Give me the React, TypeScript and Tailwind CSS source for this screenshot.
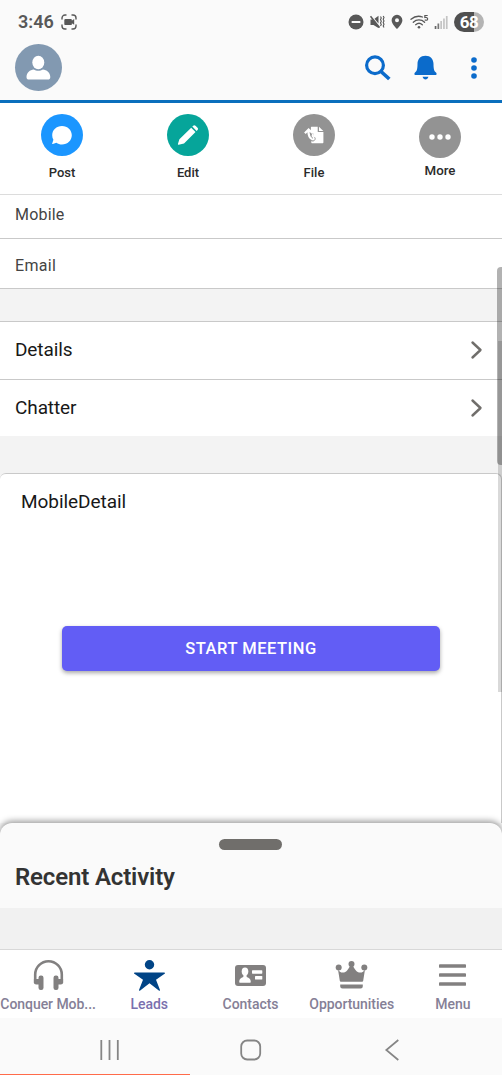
import React from "react";

interface IconProps {
  className?: string;
}

interface QuickAction {
  label: string;
  color: string;
  offset: string;
  icon: React.ReactNode;
}

interface TabItem {
  label: string;
  active?: boolean;
  icon: React.ReactNode;
}

const RecordIcon: React.FC<IconProps> = ({ className }) => (
  <svg width="16" height="16" viewBox="0 0 16 16" fill="none" className={className}>
    <path
      d="M1 5V4a3 3 0 0 1 3-3h1M11 1h1a3 3 0 0 1 3 3v1M15 11v1a3 3 0 0 1-3 3h-1M5 15H4a3 3 0 0 1-3-3v-1"
      stroke="currentColor"
      strokeWidth="1.4"
      strokeLinecap="round"
    />
    <rect x="3.3" y="4.9" width="7.6" height="6.2" rx="1.2" fill="currentColor" />
    <path d="M10 7.2 13.2 5v5.8L10 8.8z" fill="currentColor" />
  </svg>
);

const StatusIcons = () => (
  <div className="flex items-center h-6 text-[#585858]">
    <svg width="16" height="16" viewBox="0 0 16 16">
      <circle cx="8" cy="8" r="7.5" fill="currentColor" />
      <rect x="3.6" y="7" width="8.8" height="2" rx="0.5" fill="#fafafa" />
    </svg>
    <svg width="16" height="16" viewBox="0 0 16 16" className="ml-[5px]" fill="none">
      <path d="M1.5 5.5h2.2l7 8.300H9L4.500 11h-3zM5.500 4.800 9.500 1.800v7.700z" fill="currentColor" />
      <path d="M1.500 2.200 10.500 13.500" stroke="currentColor" strokeWidth="1.5" />
      <path
        d="m11.500 2.500.8 1.500-.8 1.600.8 1.700-.8 1.600.8 1.600-.8 1.600M14.200 2l.8 1.600-.8 1.700.8 1.600-.8 1.700.8 1.600-.8 1.700.8 1.600"
        stroke="currentColor"
        strokeWidth="1.1"
      />
    </svg>
    <svg width="12" height="16" viewBox="0 0 12 16" className="ml-[6px]">
      <path
        fillRule="evenodd"
        fill="currentColor"
        d="M6 .8A5.400 5.400 0 0 0 .6 6.200C.6 10 6 15 6 15s5.400-5 5.400-8.800A5.400 5.400 0 0 0 6 .8zM6 4.200a2 2 0 1 1 0 4 2 2 0 0 1 0-4z"
      />
    </svg>
    <svg width="19" height="16" viewBox="0 0 19 16" className="ml-[7px]" fill="none">
      <path
        d="M1 5.300C4.600 2.200 9 1.700 12.500 3M3.300 8.200c3.200-3 8.100-3 11.300 0M5.700 10.700c2-1.700 4.700-1.700 6.600 0"
        stroke="currentColor"
        strokeWidth="1.3"
        strokeLinecap="round"
      />
      <circle cx="9" cy="13.200" r="1.3" fill="currentColor" />
      <path
        d="M17.700 1.500h-2.900v2c1.900-.3 2.900.2 2.900 1.400 0 1.300-1.700 1.700-3 .9"
        stroke="currentColor"
        strokeWidth="1.1"
      />
    </svg>
    <svg width="14" height="14" viewBox="0 0 14 14" className="ml-[5px]">
      <path d="M.7 11h1.700v3H.7z" fill="#666" />
      <path d="M3.500 8.500h1.700V14H3.500z" fill="#777" />
      <path d="M6.300 6H8v8H6.300zM9.100 3.500h1.700V14H9.100zM11.900 1h1.700v13h-1.700z" fill="#c4c4c4" />
    </svg>
    <div className="ml-[6px] w-[30px] h-5 rounded-full bg-linear-to-r from-[#505050] from-68% to-[#b4b4b4] to-68% text-white text-[17px] leading-5 font-bold text-center tracking-[-0.5px]">
      68
    </div>
  </div>
);

const StatusBar = () => (
  <div className="h-11 pl-[18px] pr-[18px] flex items-center justify-between">
    <div className="flex items-center text-[#585858]">
      <span className="text-[18px] font-semibold leading-5">3:46</span>
      <RecordIcon className="ml-[7px]" />
    </div>
    <StatusIcons />
  </div>
);

const Header = () => (
  <div className="h-[59px] pl-[15px] pr-[25px] flex items-start justify-between border-b-[3px] border-[#0b6fbd]">
    <div className="w-[47px] h-[47px] rounded-full bg-[#8299b1]">
      <svg width="47" height="47" viewBox="0 0 47 47" fill="#fff">
        <ellipse cx="23.3" cy="18.5" rx="6" ry="6.7" />
        <path d="M11.500 33c0-4.500 3.600-7.300 7.200-7.600 2.700 1.800 6.500 1.800 9.200 0 3.700.3 7.400 3.100 7.400 7.600 0 1.800-1 2.600-2.500 2.600H14c-1.500 0-2.500-.8-2.500-2.600z" />
      </svg>
    </div>
    <div className="flex items-center h-[47px] text-[#0b6bcb]">
      <svg width="26" height="26" viewBox="0 0 26 26" fill="none" stroke="currentColor">
        <circle cx="10" cy="10.300" r="8.400" strokeWidth="3.2" />
        <path d="m16 16.500 8.300 7.500" strokeWidth="3.7" />
      </svg>
      <svg width="24" height="26" viewBox="0 0 24 26" fill="currentColor" className="ml-[23px]">
        <path d="M11.500.8c-5 0-8 3.400-8 8.200 0 5.800-1 7.400-2.500 8.600-.5.400-.6.800-.6 1.400 0 .6.500 1 1.100 1h20c.6 0 1.100-.4 1.100-1s-.1-1-.6-1.400c-1.500-1.200-2.500-2.800-2.500-8.600 0-4.800-3-8.200-8-8.200z" />
        <path d="M8.600 21.800h5.800c-.5 1.700-1.600 2.600-2.900 2.600s-2.400-.9-2.900-2.600z" />
      </svg>
      <svg width="6" height="24" viewBox="0 0 6 24" fill="currentColor" className="ml-[33px]">
        <circle cx="3" cy="4" r="2.8" />
        <circle cx="3" cy="12" r="2.8" />
        <circle cx="3" cy="20" r="2.8" />
      </svg>
    </div>
  </div>
);

const quickActions: QuickAction[] = [
  {
    label: "Post",
    color: "bg-[#1b96ff]",
    offset: "pt-[11px]",
    icon: (
      <path d="M21 12c-5.600 0-9.800 4-9.800 9.300 0 1.700.4 3.200 1.200 4.500l-1.200 3.600c-.2.500.1.700.6.500l3.600-1.200c1.600 1.100 3.500 1.800 5.600 1.800 5.600 0 9.800-4.100 9.800-9.200S26.600 12 21 12z" />
    ),
  },
  {
    label: "Edit",
    color: "bg-[#06a59a]",
    offset: "pt-[11px]",
    icon: (
      <path d="m24.200 13.700 4.300 4.300L17 29.400l-5.300 1.400c-.6.200-.9-.2-.8-.7l1.500-4.900zM25.300 12.600l.9-.9c.7-.7 1.600-.7 2.300 0l2 2c.7.700.7 1.600 0 2.300l-.9.900z" />
    ),
  },
  {
    label: "File",
    color: "bg-[#939393]",
    offset: "pt-[11px]",
    icon: (
      <>
        <path d="M18.700 12.700h6v4.700c0 .5.300.7.700.7h5v10.100c0 .7-.4 1-1 1H19.300c-.7 0-1-.4-1-1v-1.500h2.500l1.500-2-2-3 .6-1.500-3-2.800v-3.700c0-.7.200-1 .8-1z" />
        <path d="M26 12.700l4.300 4.200H26z" />
        <path
          d="M11.900 19.300l3.700-3.800 4.100 3.800M15.600 16c-.4 4.500.6 7.800 4 9.300 1.500.6 2-.7 1.200-1.500-1.900-1.500-1.700-2.700-.2-3.600"
          fill="none"
          stroke="#fff"
          strokeWidth="2.2"
        />
        <path
          d="M18.100 19.700c-.5 2 .1 3.700 1.900 4.600M18.500 26.900c2.700.8 4.700-1.600 3.100-3.700"
          fill="none"
          stroke="#939393"
          strokeWidth="0.9"
        />
      </>
    ),
  },
  {
    label: "More",
    color: "bg-[#939393]",
    offset: "pt-[13px]",
    icon: (
      <>
        <circle cx="13" cy="21" r="2.7" />
        <circle cx="21" cy="21" r="2.7" />
        <circle cx="29" cy="21" r="2.7" />
      </>
    ),
  },
];

const QuickActions = () => (
  <div className="h-[92px] -mr-0.5 grid grid-cols-4 bg-white border-b border-[#dcdcdc]">
    {quickActions.map((action) => (
      <div key={action.label} className={`flex flex-col items-center pr-[2px] ${action.offset}`}>
        <div className={`w-[42px] h-[42px] rounded-full ${action.color}`}>
          <svg width="42" height="42" viewBox="0 0 42 42" fill="#fff">
            {action.icon}
          </svg>
        </div>
        <span
          className={`leading-4 font-medium text-[#2b2b2b] ${
            action.label === "More" ? "mt-[5px] text-[13.3px]" : "mt-[9px] text-[13px]"
          }`}
        >
          {action.label}
        </span>
      </div>
    ))}
  </div>
);

const LinkRow: React.FC<{ label: string; className: string }> = ({ label, className }) => (
  <div className={`flex items-center justify-between pl-[15px] pr-[19px] bg-white ${className}`}>
    <span className="text-[19px] leading-6 text-[#181818] tracking-[-0.1px]">{label}</span>
    <svg width="13" height="20" viewBox="0 0 13 20" fill="none">
      <path
        d="m2.500 2.500 8 7.500-8 7.500"
        stroke="#706e6b"
        strokeWidth="2.4"
        strokeLinecap="round"
        strokeLinejoin="round"
      />
    </svg>
  </div>
);

const tabs: TabItem[] = [
  {
    label: "Conquer Mob...",
    icon: (
      <>
        <path
          d="M3.200 24V15.500a13.300 13.300 0 0 1 26.600 0V24"
          fill="none"
          stroke="currentColor"
          strokeWidth="2.6"
        />
        <path d="M1.900 20h6v5.500H4.200c-1.400 0-2.300-.8-2.300-2zM31.100 20h-6v5.500h3.700c1.400 0 2.300-.8 2.300-2z" />
        <rect x="6.500" y="16.500" width="5" height="14.500" rx="2.2" />
        <rect x="21.500" y="16.500" width="5" height="14.500" rx="2.2" />
      </>
    ),
  },
  {
    label: "Leads",
    active: true,
    icon: (
      <>
        <circle cx="16.5" cy="5.7" r="4.7" />
        <path d="M1.800 13.500h29.400c.9 0 1.100.8.400 1.300l-8.600 6 3.900 10c.3.900-.4 1.400-1.100.8l-9.300-7.300-9.300 7.300c-.7.600-1.400.1-1.100-.8l3.900-10-8.600-6c-.7-.5-.5-1.300.4-1.300z" />
      </>
    ),
  },
  {
    label: "Contacts",
    icon: (
      <>
        <rect x="1" y="6" width="31" height="21" rx="3" />
        <g fill="#fff">
          <ellipse cx="11" cy="12.5" rx="3.3" ry="3.9" />
          <path d="M5.200 23c0-3 1.600-4.200 4.100-5l.2-2.500h3l.2 2.500c2.500.8 4.100 2 4.100 5 0 .5-.3.700-.8.700H6c-.5 0-.8-.2-.8-.7z" />
          <rect x="18" y="11.2" width="10.300" height="3.5" rx="0.6" />
          <rect x="21" y="17" width="7.3" height="3.5" rx="0.6" />
        </g>
      </>
    ),
  },
  {
    label: "Opportunities",
    icon: (
      <>
        <circle cx="3.7" cy="8.5" r="3" />
        <circle cx="16.5" cy="5" r="3" />
        <circle cx="29.3" cy="8.5" r="3" />
        <path d="M3 10.500c1.700 3.500 6.500 4.500 9.500.5 1.500-1.900 2.700-4 3-6h2c.3 2 1.500 4.100 3 6 3 4 7.800 3 9.500-.5l-1.800 11.300c-.1.600-.5.900-1.100.9H5.900c-.6 0-1-.3-1.100-.9z" />
        <path d="M5.200 25.500h22.600V27c0 1.700-.8 2.500-2.300 2.500h-18c-1.500 0-2.300-.8-2.300-2.500z" />
      </>
    ),
  },
  {
    label: "Menu",
    icon: (
      <>
        <rect x="3" y="5.2" width="27" height="3.6" rx="0.9" />
        <rect x="3" y="14.2" width="27" height="3.6" rx="0.9" />
        <rect x="3" y="23.2" width="27" height="3.6" rx="0.9" />
      </>
    ),
  },
];

const TabBar = () => (
  <div className="h-[69px] -ml-[2px] -mr-[2px] grid grid-cols-5 bg-white border-t border-[#d8d8d8]">
    {tabs.map((tab) => (
      <div key={tab.label} className="flex flex-col items-center pt-[9px] pr-px">
        <svg
          width="33"
          height="33"
          viewBox="0 0 33 33"
          fill="currentColor"
          className={tab.active ? "text-[#014486]" : "text-[#828080]"}
        >
          {tab.icon}
        </svg>
        <span
          className={`mt-[4px] text-[14px] leading-4 font-medium whitespace-nowrap tracking-[-0.05px] ${
            tab.active ? "text-[#7a70ae]" : "text-[#858096]"
          }`}
        >
          {tab.label}
        </span>
      </div>
    ))}
  </div>
);

const SystemNav = () => (
  <div className="relative h-[57px] px-[99px] pt-[21px] flex justify-between bg-[#fafafa] text-[#858585]">
    <svg width="21" height="22" viewBox="0 0 21 22" stroke="currentColor" strokeWidth="1.8">
      <path d="M2.300 1v20M10.500 1v20M18.800 1v20" />
    </svg>
    <svg width="22" height="22" viewBox="0 0 22 22" fill="none">
      <rect x="1.2" y="1.5" width="19" height="19" rx="6" stroke="currentColor" strokeWidth="1.8" />
    </svg>
    <svg width="21" height="22" viewBox="0 0 21 22" fill="none">
      <path d="M16.300 1 4.300 11l12 10" stroke="currentColor" strokeWidth="1.7" />
    </svg>
    <div className="absolute left-0 bottom-0 h-px w-[190px] bg-[#ff6b4a]" />
  </div>
);

const App = () => {
  return (
    <div className="relative w-[502px] h-[1075px] overflow-hidden flex flex-col bg-[#fafafa] font-[Roboto,sans-serif]">
      <StatusBar />
      <Header />
      <QuickActions />

      <div className="h-[44px] pl-[15px] pt-[9px] bg-white border-b border-[#c9c9c9] text-[16px] leading-[22px] text-[#444] tracking-[0.2px]">
        Mobile
      </div>
      <div className="h-[50px] pl-[15px] pt-[15px] bg-white border-b border-[#c9c9c9] text-[16px] leading-[23px] text-[#444] tracking-[0.3px]">
        Email
      </div>
      <div className="h-8 bg-[#f3f3f3]" />
      <LinkRow label="Details" className="h-[59px] pb-px border-y border-[#c9c9c9]" />
      <LinkRow label="Chatter" className="h-[56px]" />

      <div className="h-[387px] pt-[37px] bg-[#f3f3f3]">
        <div className="h-full rounded-t-md border-t border-r border-[#c9c9c9] bg-white">
          <h2 className="pl-[21px] pt-[16px] text-[19px] leading-6 text-[#181818] tracking-[-0.05px]">
            MobileDetail
          </h2>
          <button className="block ml-[62px] mt-[112px] w-[378px] h-[45px] pt-[2px] rounded-[5px] bg-[#625df5] text-white text-[16.5px] font-medium tracking-[0.52px] shadow-[0_2px_4px_rgba(0,0,0,0.35)]">
            START MEETING
          </button>
        </div>
      </div>

      <div className="relative z-10 h-[85px] rounded-t-[12px] bg-[#fafafa] shadow-[0_-2px_6px_rgba(0,0,0,0.4)]">
        <div className="pt-4">
          <div className="ml-[219px] w-[63px] h-[11px] rounded-full bg-[#706e6b]" />
        </div>
        <h2 className="pl-[15px] pt-[12px] text-[24px] leading-[30px] font-semibold text-[#333] tracking-[-0.15px]">
          Recent Activity
        </h2>
      </div>
      <div className="relative z-10 h-[41px] bg-[#f1f1f1]" />
      <div className="relative z-10">
        <TabBar />
        <SystemNav />
      </div>

      {/* scroll indicators over the content */}
      <div className="absolute top-[341px] right-0 w-1 h-[351px] bg-black/15" />
      <div className="absolute top-[267px] right-0 w-[5px] h-[198px] rounded-l-[4px] bg-black/30" />
    </div>
  );
};

export default App;
